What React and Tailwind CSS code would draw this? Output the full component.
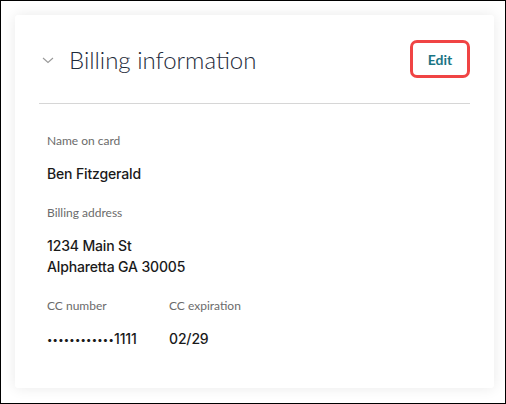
import React from 'react';

const Field = ({ label, children, className = '' }) => (
  <div className={className}>
    <div className="text-[12px] leading-[16px] text-[#6b6b6b]" style={{ fontFamily: 'Lato, sans-serif' }}>{label}</div>
    <div className="mt-[14px] text-[14px] leading-[21px] font-medium tracking-[-0.15px] text-[#1a1a1a]">{children}</div>
  </div>
);

const App = () => {
  return (
    <div className="w-[506px] h-[404px] border border-black bg-white p-[14px] pb-[15px]" style={{ fontFamily: 'Inter, sans-serif' }}>
      {/* Card */}
      <div className="h-[373px] w-[479px] rounded-[3px] bg-white px-[24px] shadow-[0_0_14px_rgba(0,0,0,0.09)]">
        {/* Header */}
        <div className="flex items-center h-[89px] border-b border-[#d6d6d6] pt-[1px]">
          <svg width="12" height="7" viewBox="0 0 12 7" className="ml-[3px] mr-[15px] mt-[2px]">
            <path d="M1 1 L6 5.5 L11 1" fill="none" stroke="#9a9a9a" strokeWidth="1.1" />
          </svg>
          <h1 className="text-[24px] font-light text-[#1e2a3a]" style={{ fontFamily: 'Lato, sans-serif' }}>Billing information</h1>
          <button className="ml-auto w-[60px] h-[38px] rounded-[7px] border-[3px] border-[#f04444] text-[14px] font-bold text-[#1a7584] -mt-[1px]" style={{ fontFamily: 'Lato, sans-serif' }}>
            Edit
          </button>
        </div>

        {/* Details */}
        <div className="pl-[8px] pt-[29px] flex flex-col gap-[21px]">
          <Field label="Name on card">Ben Fitzgerald</Field>
          <Field label="Billing address">
            1234 Main St
            <br />
            Alpharetta GA 30005
          </Field>
          <div className="flex">
            <Field label="CC number" className="w-[122px]">
              <span className="text-[10px] tracking-[0.25px] align-[1px]">••••••••••••</span>1111
            </Field>
            <Field label="CC expiration">02/29</Field>
          </div>
        </div>
      </div>
    </div>
  );
};

export default App;
